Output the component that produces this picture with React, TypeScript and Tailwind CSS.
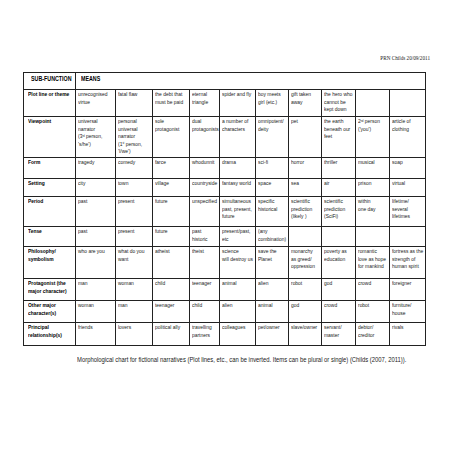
import React from "react";

type Cell = React.ReactNode;

const rows: { label: Cell; h: number; cells: Cell[] }[] = [
  {
    label: "Plot line or theme",
    h: 27,
    cells: [
      <>unrecognised<br />virtue</>,
      "fatal flaw",
      <>the debt that<br />must be paid</>,
      <>eternal<br />triangle</>,
      "spider and fly",
      <>boy meets<br />girl (etc.)</>,
      <>gift taken<br />away</>,
      <>the hero who<br />cannot be<br />kept down</>,
      "",
      "",
    ],
  },
  {
    label: "Viewpoint",
    h: 41,
    cells: [
      <>universal<br />narrator<br />(3<sup className="text-[3px]">rd</sup> person,<br />'s/he')</>,
      <>personal<br />universal<br />narrator<br />(1<sup className="text-[3px]">st</sup> person,<br />'I/we')</>,
      <>sole<br />protagonist</>,
      <>dual<br />protagonists</>,
      <>a number of<br />characters</>,
      <>omnipotent/<br />deity</>,
      "pet",
      <>the earth<br />beneath our<br />feet</>,
      <>2<sup className="text-[3px]">nd</sup> person<br />('you')</>,
      <>article of<br />clothing</>,
    ],
  },
  {
    label: "Form",
    h: 21,
    cells: ["tragedy", "comedy", "farce", "whodunnit", "drama", "sci-fi", "horror", "thriller", "musical", "soap"],
  },
  {
    label: "Setting",
    h: 18,
    cells: ["city", "town", "village", "countryside", "fantasy world", "space", "sea", "air", "prison", "virtual"],
  },
  {
    label: "Period",
    h: 30,
    cells: [
      "past",
      "present",
      "future",
      "unspecified",
      <>simultaneous<br />past, present,<br />future</>,
      <>specific<br />historical</>,
      <>scientific<br />prediction<br />(likely )</>,
      <>scientific<br />prediction<br />(SciFi)</>,
      <>within<br />one day</>,
      <>lifetime/<br />several<br />lifetimes</>,
    ],
  },
  {
    label: "Tense",
    h: 20,
    cells: [
      "past",
      "present",
      "future",
      <>past<br />historic</>,
      <>present/past,<br />etc</>,
      <>(any<br />combination)</>,
      "",
      "",
      "",
      "",
    ],
  },
  {
    label: <>Philosophy/<br />symbolism</>,
    h: 32,
    cells: [
      "who are you",
      <>what do you<br />want</>,
      "atheist",
      "theist",
      <>science<br />will destroy us</>,
      <>save the<br />Planet</>,
      <>monarchy<br />as greed/<br />oppression</>,
      <>poverty as<br />education</>,
      <>romantic<br />love as hope<br />for mankind</>,
      <>fortress as the<br />strength of<br />human spirit</>,
    ],
  },
  {
    label: <>Protagonist (the<br />major character)</>,
    h: 22,
    cells: ["man", "woman", "child", "teenager", "animal", "alien", "robot", "god", "crowd", "foreigner"],
  },
  {
    label: <>Other major<br />character(s)</>,
    h: 22,
    cells: ["woman", "man", "teenager", "child", "alien", "animal", "god", "crowd", "robot", <>furniture/<br />house</>],
  },
  {
    label: <>Principal<br />relationship(s)</>,
    h: 23,
    cells: [
      "friends",
      "lovers",
      "political ally",
      <>travelling<br />partners</>,
      "colleagues",
      "pet/owner",
      "slave/owner",
      <>servant/<br />master</>,
      <>debtor/<br />creditor</>,
      "rivals",
    ],
  },
];

const widths = [52, 40, 37, 37, 30, 36, 33, 33, 34, 34, 36];

function N({ children }: { children: React.ReactNode }) {
  return <span className="inline-block origin-top-left scale-x-[0.82] whitespace-nowrap">{children}</span>;
}

export default function App() {
  return (
    <div className="w-[452px] h-[452px] bg-white pt-[55px] text-[#222]">
      <div className="flex justify-end pr-[22px]">
        <div className="font-['Liberation_Serif','Times_New_Roman',serif] text-[5.2px] leading-[6px] text-[#222]">
          PRN Childs 20/09/2011
        </div>
      </div>
      <table className="ml-[23px] mt-[11px] w-[402px] table-fixed border-collapse border-[1.5px] border-[#222] font-['Liberation_Sans',Arial,sans-serif] text-[6px] leading-[7.5px]">
        <colgroup>
          {widths.map((w, i) => (
            <col key={i} style={{ width: w }} />
          ))}
        </colgroup>
        <tbody>
          <tr className="h-[17px]">
            <td className="border border-[#222] border-b-[1.5px] align-top pl-[7px] pt-[2px] font-bold text-[6.5px] text-black whitespace-nowrap">
              <N>SUB-FUNCTION</N>
            </td>
            <td colSpan={10} className="border border-[#222] border-b-[1.5px] align-top pl-[5px] pt-[2px] font-bold text-[6.5px] text-black whitespace-nowrap">
              <N>MEANS</N>
            </td>
          </tr>
          {rows.map((r, ri) => (
            <tr key={ri} style={{ height: r.h }}>
              <td className="border border-[#222] align-top pl-[4px] pt-[1px] font-bold text-black whitespace-nowrap">
                <N>{r.label}</N>
              </td>
              {r.cells.map((c, ci) => (
                <td key={ci} className="border border-[#222] align-top pl-[2px] pt-[1px] whitespace-nowrap text-[#222]">
                  <N>{c}</N>
                </td>
              ))}
            </tr>
          ))}
        </tbody>
      </table>
      <div className="mt-[10px] pl-[77px] font-['Liberation_Sans',Arial,sans-serif] text-[7px] leading-[8px] text-[#222] whitespace-nowrap">
        <span className="inline-block origin-top-left scale-x-[0.84]">
          Morphological chart for fictional narratives (Plot lines, etc., can be inverted. Items can be plural or single) (Childs (2007, 2011)).
        </span>
      </div>
    </div>
  );
}
